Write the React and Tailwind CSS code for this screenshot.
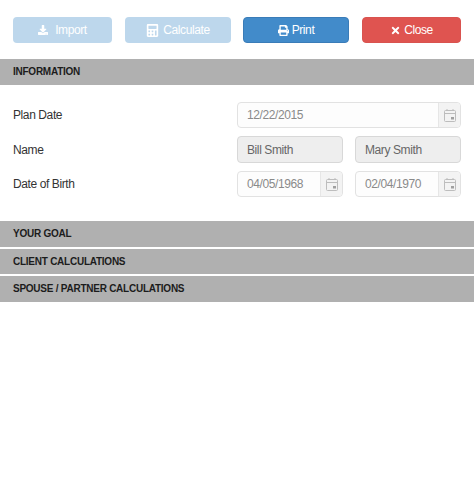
import React from 'react';
import { FaDownload, FaCalculator, FaPrint, FaTimes } from 'react-icons/fa';

const CalendarIcon = () => (
    <svg width="12" height="13" viewBox="0 0 12 13" fill="none" stroke="#bdbdbd" strokeWidth="1">
        <path d="M1.5 1.5h9a1 1 0 0 1 1 1v9a1 1 0 0 1-1 1h-9a1 1 0 0 1-1-1v-9a1 1 0 0 1 1-1z" />
        <path d="M3 0v1.5M9 0v1.5M.5 4.5h11" />
        <rect x="7" y="8" width="3" height="2.5" fill="#a0a0a0" stroke="none" />
    </svg>
);

const DateInput = ({ value, className }) => (
    <div className={`flex h-[26px] rounded-[4px] border border-[#e2e2e2] bg-[#fdfdfd] ${className}`}>
        <div className="flex flex-1 items-center pl-[9px] text-[12px] tracking-[-0.4px] text-[#8a8a8a]">{value}</div>
        <div className="flex w-[22px] items-center justify-center rounded-r-[4px] border-l border-[#e6e6e6] bg-[#f3f3f3]">
            <CalendarIcon />
        </div>
    </div>
);

const NameInput = ({ value }) => (
    <div className="flex h-[27px] w-[106px] items-center rounded-[4px] border border-[#d8d8d8] bg-[#eeeeee] pl-[9px] text-[12px] tracking-[-0.4px] text-[#666666]">
        {value}
    </div>
);

const SectionHeader = ({ title, className = '' }) => (
    <div className={`flex h-[25.5px] items-center bg-[#b0b0b0] pl-[13px] text-[10px] font-bold tracking-[-0.25px] text-[#1c1c1c] ${className}`}>
        {title}
    </div>
);

const ActionButton = ({ icon, label, className }) => (
    <button className={`flex h-[26px] items-center justify-center gap-[3px] rounded-[4px] text-[12px] tracking-[-0.4px] text-white ${className}`}>
        {icon}
        {label}
    </button>
);

const FormRow = ({ label, children }) => (
    <div className="flex items-center">
        <div className="w-[224px] text-[12px] tracking-[-0.4px] text-[#333333]">{label}</div>
        {children}
    </div>
);

export default function App() {
    return (
        <div className="h-[492px] w-[474px] bg-white font-['Liberation_Sans',Arial,sans-serif]">
            <div className="flex pl-[13px] pt-[17px]">
                <ActionButton icon={<FaDownload size={10} className="mr-[4px]" />} label="Import" className="w-[99px] bg-[#bdd7ec]" />
                <ActionButton icon={<FaCalculator size={13} className="mr-[1px]" />} label="Calculate" className="ml-[13px] w-[106px] bg-[#bdd7ec]" />
                <ActionButton icon={<FaPrint size={11} />} label="Print" className="ml-[12px] w-[106px] border border-[#3a7cb8] bg-[#428bca]" />
                <ActionButton icon={<FaTimes size={11} />} label="Close" className="ml-[13px] w-[99px] border border-[#d9534f] bg-[#df5450]" />
            </div>

            <SectionHeader title="INFORMATION" className="mt-[16px]" />

            <div className="flex flex-col gap-[8px] pl-[13px] pt-[17.5px]">
                <FormRow label="Plan Date">
                    <DateInput value="12/22/2015" className="w-[224px]" />
                </FormRow>
                <FormRow label="Name">
                    <div className="flex gap-[12px]">
                        <NameInput value="Bill Smith" />
                        <NameInput value="Mary Smith" />
                    </div>
                </FormRow>
                <FormRow label="Date of Birth">
                    <div className="flex gap-[12px]">
                        <DateInput value="04/05/1968" className="w-[106px]" />
                        <DateInput value="02/04/1970" className="w-[106px]" />
                    </div>
                </FormRow>
            </div>

            <div className="mt-[24px] flex flex-col gap-[2px]">
                <SectionHeader title="YOUR GOAL" />
                <SectionHeader title="CLIENT CALCULATIONS" />
                <SectionHeader title="SPOUSE / PARTNER CALCULATIONS" />
            </div>
        </div>
    );
}
